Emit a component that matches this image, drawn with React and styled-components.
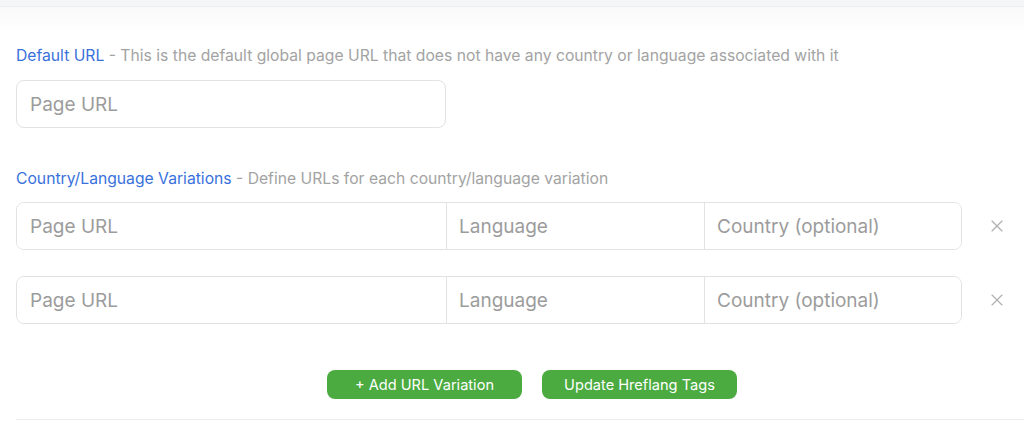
import React, { useState } from "react";
import styled, { createGlobalStyle } from "styled-components";
import { X } from "lucide-react";

const GlobalStyle = createGlobalStyle`
  * { box-sizing: border-box; }
  body {
    margin: 0;
    background: #ffffff;
    font-family: Inter, "Liberation Sans", sans-serif;
  }
`;

const Page = styled.div`
  width: 1024px;
  height: 427px;
  overflow: hidden;
  background: #ffffff;
`;

const TopBand = styled.div`
  height: 7px;
  background: #f4f5f7;
  border-bottom: 1px solid #eceef1;
`;

const Fade = styled.div`
  height: 26px;
  background: linear-gradient(#f9f9f9, #ffffff);
`;

const Body = styled.div`
  padding: 0 16px;
`;

const Label = styled.div`
  font-size: 15.7px;
  line-height: 20px;
  color: #a3a3a3;
  white-space: nowrap;
  margin-top: ${p => p.$top}px;
  span {
    color: #3871dc;
  }
`;

const Input = styled.input`
  display: block;
  width: 430px;
  height: 48px;
  margin-top: 14px;
  padding: 0 13px;
  border: 1px solid #e2e2e2;
  border-radius: 8px;
  font-family: inherit;
  font-size: 19px;
  color: #333;
  background: #fff;
  outline: none;
  &::placeholder {
    color: #9c9c9c;
  }
`;

const Rows = styled.div`
  display: flex;
  flex-direction: column;
  gap: 26px;
  margin-top: 13px;
`;

const Row = styled.div`
  display: flex;
  align-items: center;
`;

const Group = styled.div`
  flex: 1;
  display: flex;
  height: 48px;
  border: 1px solid #e2e2e2;
  border-radius: 8px;
  overflow: hidden;
`;

const Cell = styled.input`
  flex: ${p => (p.$width ? `0 0 ${p.$width}px` : "1 1 0")};
  min-width: 0;
  height: 100%;
  padding: 0 12px 0 ${p => (p.$first ? 13 : 12)}px;
  border: none;
  border-left: ${p => (p.$first ? "none" : "1px solid #e2e2e2")};
  font-family: inherit;
  font-size: 19px;
  color: #333;
  background: #fff;
  outline: none;
  &::placeholder {
    color: #9c9c9c;
  }
`;

const Remove = styled.button`
  width: 22px;
  height: 22px;
  margin-left: 24px;
  padding: 0;
  border: none;
  background: none;
  color: #b0b0b0;
  display: flex;
  align-items: center;
  justify-content: center;
  cursor: pointer;
`;

const Actions = styled.div`
  display: flex;
  justify-content: center;
  gap: 20px;
  margin-top: 46px;
  padding-left: 40px;
`;

const Button = styled.button`
  width: 195px;
  height: 29px;
  border: none;
  border-radius: 8px;
  background: #4bab40;
  color: #ffffff;
  font-family: inherit;
  font-size: 14.6px;
  cursor: pointer;
`;

const Divider = styled.div`
  margin-top: 20px;
  height: 1px;
  background: #ececec;
  margin-right: -16px;
`;

const App = () => {
  const [rows, setRows] = useState([1, 2]);

  return (
    <Page>
      <GlobalStyle />
      <TopBand />
      <Fade />
      <Body>
        <Label $top={13}>
          <span>Default URL</span> - This is the default global page URL that
          does not have any country or language associated with it
        </Label>
        <Input placeholder="Page URL" />
        <Label $top={41}>
          <span>Country/Language Variations</span> - Define URLs for each
          country/language variation
        </Label>
        <Rows>
          {rows.map(id => (
            <Row key={id}>
              <Group>
                <Cell $first $width={429} placeholder="Page URL" />
                <Cell $width={258} placeholder="Language" />
                <Cell placeholder="Country (optional)" />
              </Group>
              <Remove onClick={() => setRows(rows.filter(r => r !== id))}>
                <X size={20} strokeWidth={1.4} />
              </Remove>
            </Row>
          ))}
        </Rows>
        <Actions>
          <Button onClick={() => setRows([...rows, Date.now()])}>
            + Add URL Variation
          </Button>
          <Button>Update Hreflang Tags</Button>
        </Actions>
        <Divider />
      </Body>
    </Page>
  );
};

export default App;
